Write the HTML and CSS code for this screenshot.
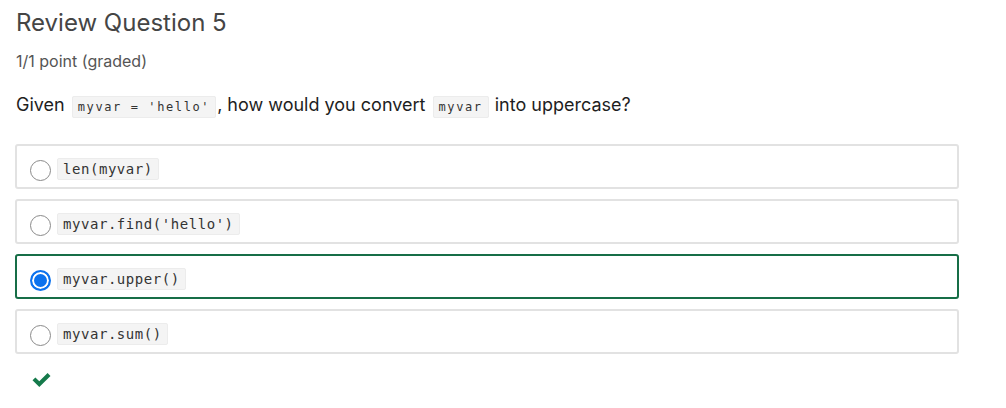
FILE: index.html
```html
<!DOCTYPE html>
<html lang="en">
<head>
<meta charset="utf-8">
<title>Review Question 5</title>
<link rel="stylesheet" href="styles.css">
</head>
<body>
<div class="problem">
  <h2 class="title">Review Question 5</h2>
  <div class="points">1/1 point (graded)</div>
  <p class="question">Given <code class="qcode">myvar = 'hello'</code>, how would you convert <code class="qcode">myvar</code> into uppercase?</p>
  <div class="choices">
    <label class="choice">
      <span class="radio"></span>
      <code class="ccode">len(myvar)</code>
    </label>
    <label class="choice">
      <span class="radio"></span>
      <code class="ccode">myvar.find('hello')</code>
    </label>
    <label class="choice selected">
      <span class="radio checked"></span>
      <code class="ccode">myvar.upper()</code>
    </label>
    <label class="choice">
      <span class="radio"></span>
      <code class="ccode">myvar.sum()</code>
    </label>
  </div>
  <div class="status">
    <svg class="check" width="20" height="14" viewBox="0 0 20 14" aria-hidden="true">
      <path d="M0.5 7.2 L3.4 4.4 L7.3 8.2 L15.6 0 L18.5 2.9 L7.3 14 Z" fill="#157a4b"/>
    </svg>
  </div>
</div>
</body>
</html>
```

FILE: styles.css
```css
html, body {
  margin: 0;
  padding: 0;
  background: #ffffff;
}

body {
  font-family: Inter, "Open Sans", "Liberation Sans", sans-serif;
  color: #222222;
}

.problem {
  width: 944px;
  padding: 8px 0 0 15px;
}

.title {
  margin: 0 0 0 1px;
  font-size: 24px;
  line-height: 30px;
  font-weight: 400;
  color: #454545;
}

.points {
  margin: 14px 0 0 1px;
  font-size: 16px;
  line-height: 18px;
  color: #555555;
}

.question {
  margin: 23px 0 0 1px;
  font-size: 18px;
  line-height: 24px;
  color: #1e1e1e;
}

code {
  font-family: "DejaVu Sans Mono", "Liberation Mono", monospace;
  background: #f4f4f4;
  border: 1px solid #ececec;
  border-radius: 2px;
  color: #333333;
}

.qcode {
  font-size: 12px;
  letter-spacing: 1.6px;
  padding: 3px 5px;
  margin: 0 1px 0 2px;
}

.choices {
  margin-top: 25px;
  display: flex;
  flex-direction: column;
  gap: 10px;
}

.choice {
  display: flex;
  align-items: center;
  height: 45px;
  box-sizing: border-box;
  border: 2px solid #e2e2e2;
  border-radius: 3px;
  padding: 4px 0 0 13px;
}

.choice.selected {
  border-color: #176e47;
}

.radio {
  width: 21px;
  height: 21px;
  box-sizing: border-box;
  border: 1px solid #8a8a8a;
  border-radius: 50%;
  background: #ffffff;
  margin: 4px 6px 0 0;
  flex: none;
}

.radio.checked {
  border: 2px solid #0b72ee;
  background: #0b72ee;
  box-shadow: inset 0 0 0 2px #ffffff;
}

.ccode {
  font-size: 14px;
  letter-spacing: 0.55px;
  line-height: 18px;
  padding: 1px 5px;
}

.status {
  padding: 19px 0 0 17px;
}

.check {
  display: block;
}
```
